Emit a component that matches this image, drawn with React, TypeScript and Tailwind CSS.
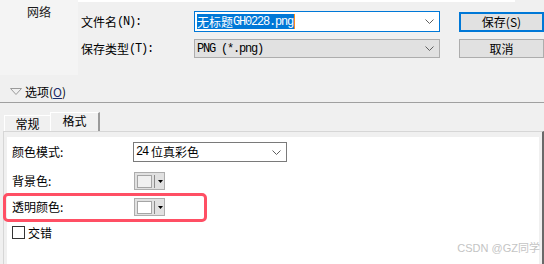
const cjk = "font-['Noto_Sans_CJK_SC',sans-serif]";
const mono = "font-['Liberation_Mono','Noto_Sans_CJK_SC',monospace] text-[12px] tracking-[-1.2px]";

function Chevron({ className = '' }: { className?: string }) {
  return (
    <svg width="9" height="5" viewBox="0 0 9 5" className={className}>
      <path d="M0.5 0.5 L4.5 4.5 L8.5 0.5" fill="none" stroke="#5f5f5f" strokeWidth="1" />
    </svg>
  );
}

function ColorButton({ swatch }: { swatch: string }) {
  return (
    <div className="ml-[1px] w-[31px] h-[18px] bg-[#e1e1e1] border border-[#adadad] flex items-center pl-[2px]">
      <div className={`w-[15px] h-[13px] border border-[#a5a5a5] ${swatch}`} />
      <div className="ml-[2px] w-[1px] h-[13px] bg-[#8c8c8c]" />
      <svg width="5" height="3" viewBox="0 0 5 3" className="ml-[3px] mt-[1px]">
        <path d="M0 0 H5 L2.5 3 Z" fill="#000" />
      </svg>
    </div>
  );
}

export default function App() {
  return (
    <div className={`relative w-[544px] h-[264px] overflow-hidden bg-[#f0f0f0] text-[12px] text-black ${cjk}`}>
      {/* top: places panel + file name / type */}
      <div className="flex h-[75px]">
        <div className="w-[93px] h-[75px] bg-[#f4f4f4] flex justify-center pt-[3px]">
          <span className="leading-[18px] text-[#1a1a1a]">网络</span>
        </div>
        <div className="flex-1 flex flex-col">
          <div className="w-[437px] h-[2px] bg-white" />
          <div className="pl-[3px] pt-[9px] grid grid-cols-[94px_246px_85px] gap-x-[19px] gap-y-[7px] grid-rows-[21px_19px]">
            <div className="flex items-center leading-none">
              文件名<span className={mono}>(N):</span>
            </div>
            <div className="border border-[#0078d7] bg-white flex items-center pl-[2px] pr-[5px]">
              <span className="bg-[#0078d7] text-white flex items-center h-[15px] leading-none shrink-0">
                <span>无标题</span>
                <span className={`${mono} pr-[1px]`}>GH0228.png</span>
              </span>
              <span className="w-[1px] h-[15px] bg-[#ff8c1a] shrink-0" />
              <Chevron className="ml-auto" />
            </div>
            <div className="mt-[1px] border-2 border-[#0078d7] bg-[#e1e1e1] flex items-center justify-center leading-none">
              保存(S)
            </div>
            <div className="flex items-center leading-none">
              保存类型<span className={mono}>(T):</span>
            </div>
            <div className="border border-[#adadad] bg-[#e1e1e1] flex items-center pl-[2px] pr-[5px]">
              <span className={`${mono} leading-none`}>PNG (*.png)</span>
              <Chevron className="ml-auto" />
            </div>
            <div className="border border-[#adadad] bg-[#e1e1e1] flex items-center justify-center leading-none">
              取消
            </div>
          </div>
        </div>
      </div>

      {/* options toggle */}
      <div className="h-[27px] pt-[6px] pl-[10px] flex items-center gap-[3px]">
        <svg width="12" height="7" viewBox="0 0 12 7">
          <path d="M0.5 0.5 H11.5 L6 6.5 Z" fill="none" stroke="#9a9a9a" strokeWidth="1" />
        </svg>
        <span className="leading-none">
          选项(<span className="underline text-[#1a2a6a]">O</span>)
        </span>
      </div>
      <div className="h-[1px] bg-[#a0a0a0]" />

      {/* tabs */}
      <div className="mt-[9px] pl-[4px] h-[19px] flex items-end">
        <div className="w-[46px] h-[16px] border-t border-l border-white bg-[#f0f0f0] flex items-center justify-center leading-none">
          常规
        </div>
        <div className="w-[50px] h-[19px] border-t border-l border-white border-r-2 border-r-[#9a9a9a] bg-[#f0f0f0] flex items-center justify-center leading-none pb-[2px]">
          格式
        </div>
      </div>

      {/* tab panel */}
      <div className="ml-[3px] h-[133px] border-l border-t border-[#d6d6d6] border-r-2 border-r-[#696969] bg-[#f0f0f0] pt-[5px] pl-[3px] pr-[3px]">
        <div className="h-full bg-white flex flex-col pl-[5px]">
          <div className="mt-[5px] h-[20px] flex items-center">
            <div className="w-[121px]">颜色模式:</div>
            <div className="w-[154px] h-[20px] border border-[#7a7a7a] bg-white flex items-center pl-[2px] pr-[5px]">
              <span className={mono}>24 </span>
              <span className="ml-[3px] leading-none">位真彩色</span>
              <Chevron className="ml-auto" />
            </div>
          </div>
          <div className="mt-[10px] h-[18px] flex items-center">
            <div className="w-[121px]">背景色:</div>
            <ColorButton swatch="bg-[#f0f0f0]" />
          </div>
          <div className="mt-[8px] h-[18px] flex items-center">
            <div className="w-[121px]">透明颜色:</div>
            <ColorButton swatch="bg-white" />
          </div>
          <div className="mt-[10px] h-[13px] flex items-center gap-[3px]">
            <div className="w-[13px] h-[13px] border border-[#333] bg-white" />
            <span className="leading-none">交错</span>
          </div>
        </div>
      </div>

      {/* annotation highlight */}
      <div className="absolute left-[3px] top-[193px] w-[204px] h-[29px] border-[3px] border-[#ff4f64] rounded-[5px]" />

      {/* watermark */}
      <div className="absolute right-[4px] top-[241px] text-[11px] leading-[14px] text-[#c4c4c4] font-['Liberation_Sans','Noto_Sans_CJK_SC',sans-serif]">
        CSDN @GZ同学
      </div>
    </div>
  );
}
